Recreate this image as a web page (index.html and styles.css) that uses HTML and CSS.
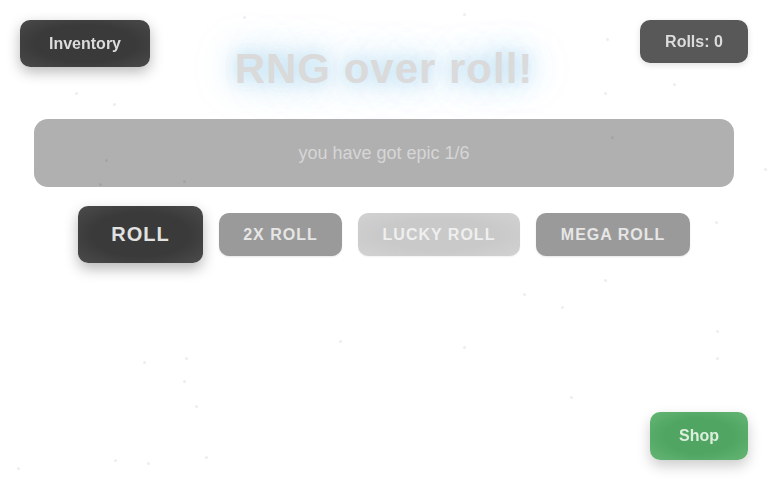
FILE: index.html
```html
<!DOCTYPE html>
<html lang="en">
<head>
<meta charset="utf-8">
<title>RNG over roll!</title>
<link rel="stylesheet" href="styles.css">
</head>
<body>
<div class="particles" aria-hidden="true">
  <span style="left:243px;top:16px"></span>
  <span style="left:463px;top:13px"></span>
  <span style="left:606px;top:38px"></span>
  <span style="left:75px;top:92px"></span>
  <span style="left:113px;top:103px"></span>
  <span style="left:604px;top:92px"></span>
  <span style="left:673px;top:83px"></span>
  <span style="left:105px;top:159px"></span>
  <span style="left:99px;top:183px"></span>
  <span style="left:183px;top:180px"></span>
  <span style="left:611px;top:136px"></span>
  <span style="left:764px;top:168px"></span>
  <span style="left:715px;top:221px"></span>
  <span style="left:523px;top:293px"></span>
  <span style="left:561px;top:306px"></span>
  <span style="left:604px;top:279px"></span>
  <span style="left:716px;top:330px"></span>
  <span style="left:143px;top:361px"></span>
  <span style="left:185px;top:357px"></span>
  <span style="left:183px;top:380px"></span>
  <span style="left:195px;top:405px"></span>
  <span style="left:339px;top:340px"></span>
  <span style="left:463px;top:346px"></span>
  <span style="left:716px;top:357px"></span>
  <span style="left:114px;top:459px"></span>
  <span style="left:147px;top:462px"></span>
  <span style="left:205px;top:456px"></span>
  <span style="left:17px;top:467px"></span>
  <span style="left:570px;top:396px"></span>
</div>

<button class="corner corner-left btn-dark">Inventory</button>
<div class="corner corner-right counter">Rolls: 0</div>

<main class="game">
  <h1 class="title">RNG over roll!</h1>
  <div class="result">you have got epic 1/6</div>
  <div class="actions">
    <button class="roll roll-main">ROLL</button>
    <button class="roll roll-grey roll-double">2X ROLL</button>
    <button class="roll roll-light roll-lucky">LUCKY ROLL</button>
    <button class="roll roll-grey roll-mega">MEGA ROLL</button>
  </div>
</main>

<button class="corner corner-bottom shop">Shop</button>
</body>
</html>
```

FILE: styles.css
```css
html, body {
  margin: 0;
  height: 100%;
  background: #ffffff;
  font-family: "Liberation Sans", Arial, sans-serif;
  overflow: hidden;
}

.particles {
  position: fixed;
  inset: 0;
  pointer-events: none;
  z-index: 5;
}
.particles span {
  position: absolute;
  width: 3px;
  height: 3px;
  border-radius: 50%;
  background: rgba(0, 0, 0, 0.07);
  filter: blur(0.6px);
}

button {
  font-family: inherit;
  border: none;
  cursor: pointer;
}

/* corner controls */
.corner {
  position: fixed;
  display: flex;
  align-items: center;
  justify-content: center;
  font-weight: bold;
  font-size: 16px;
  color: #dcdcdc;
  border-radius: 10px;
}
.corner-left {
  left: 20px;
  top: 20px;
  width: 130px;
  height: 47px;
}
.btn-dark {
  background: radial-gradient(ellipse at center, #3a3a3a 55%, #4a4a4a 100%);
  box-shadow: 0 5px 14px rgba(0, 0, 0, 0.28);
}
.corner-right {
  right: 20px;
  top: 20px;
  width: 108px;
  height: 43px;
}
.counter {
  background: #585858;
  box-shadow: 0 2px 6px rgba(0, 0, 0, 0.12);
}
.corner-bottom {
  right: 20px;
  bottom: 20px;
  width: 98px;
  height: 48px;
}
.shop {
  background: radial-gradient(ellipse at center, #4fa561 50%, #66b675 100%);
  color: #dcefdc;
  box-shadow: 0 6px 14px rgba(0, 0, 0, 0.2);
}

/* main column */
.game {
  padding-top: 44px;
  display: flex;
  flex-direction: column;
  align-items: center;
}

.title {
  margin: 0;
  font-size: 42px;
  line-height: 50px;
  font-weight: bold;
  letter-spacing: 1px;
  color: #dadada;
  text-shadow: 0 0 14px rgba(195, 228, 246, 0.95), 0 0 30px rgba(185, 222, 242, 0.9), 0 0 44px rgba(200, 230, 245, 0.7);
}

.result {
  box-sizing: border-box;
  align-self: stretch;
  margin: 25px 34px 0;
  height: 68px;
  display: flex;
  align-items: center;
  justify-content: center;
  background: #b0b0b0;
  border-radius: 14px;
  font-size: 18px;
  color: #d6d6d6;
}

.actions {
  margin-top: 19px;
  display: flex;
  align-items: center;
  justify-content: center;
  gap: 16px;
}

.roll {
  height: 43px;
  padding: 0;
  border-radius: 10px;
  font-size: 16px;
  font-weight: bold;
  letter-spacing: 1px;
}
.roll-main {
  height: 57px;
  width: 125px;
  font-size: 20px;
  background: radial-gradient(ellipse at center, #3a3a3a 55%, #4c4c4c 100%);
  color: #e2e2e2;
  box-shadow: 0 6px 14px rgba(0, 0, 0, 0.28);
}
.roll-double { width: 123px; }
.roll-lucky { width: 162px; }
.roll-mega { width: 154px; }
.roll-grey {
  background: #9a9a9a;
  color: #e6e6e6;
  box-shadow: 0 1px 2px rgba(0, 0, 0, 0.1);
}
.roll-light {
  background: radial-gradient(ellipse at center, #c9c9c9 50%, #d2d2d2 100%);
  color: #efefef;
  box-shadow: 0 1px 2px rgba(0, 0, 0, 0.06);
}
```
